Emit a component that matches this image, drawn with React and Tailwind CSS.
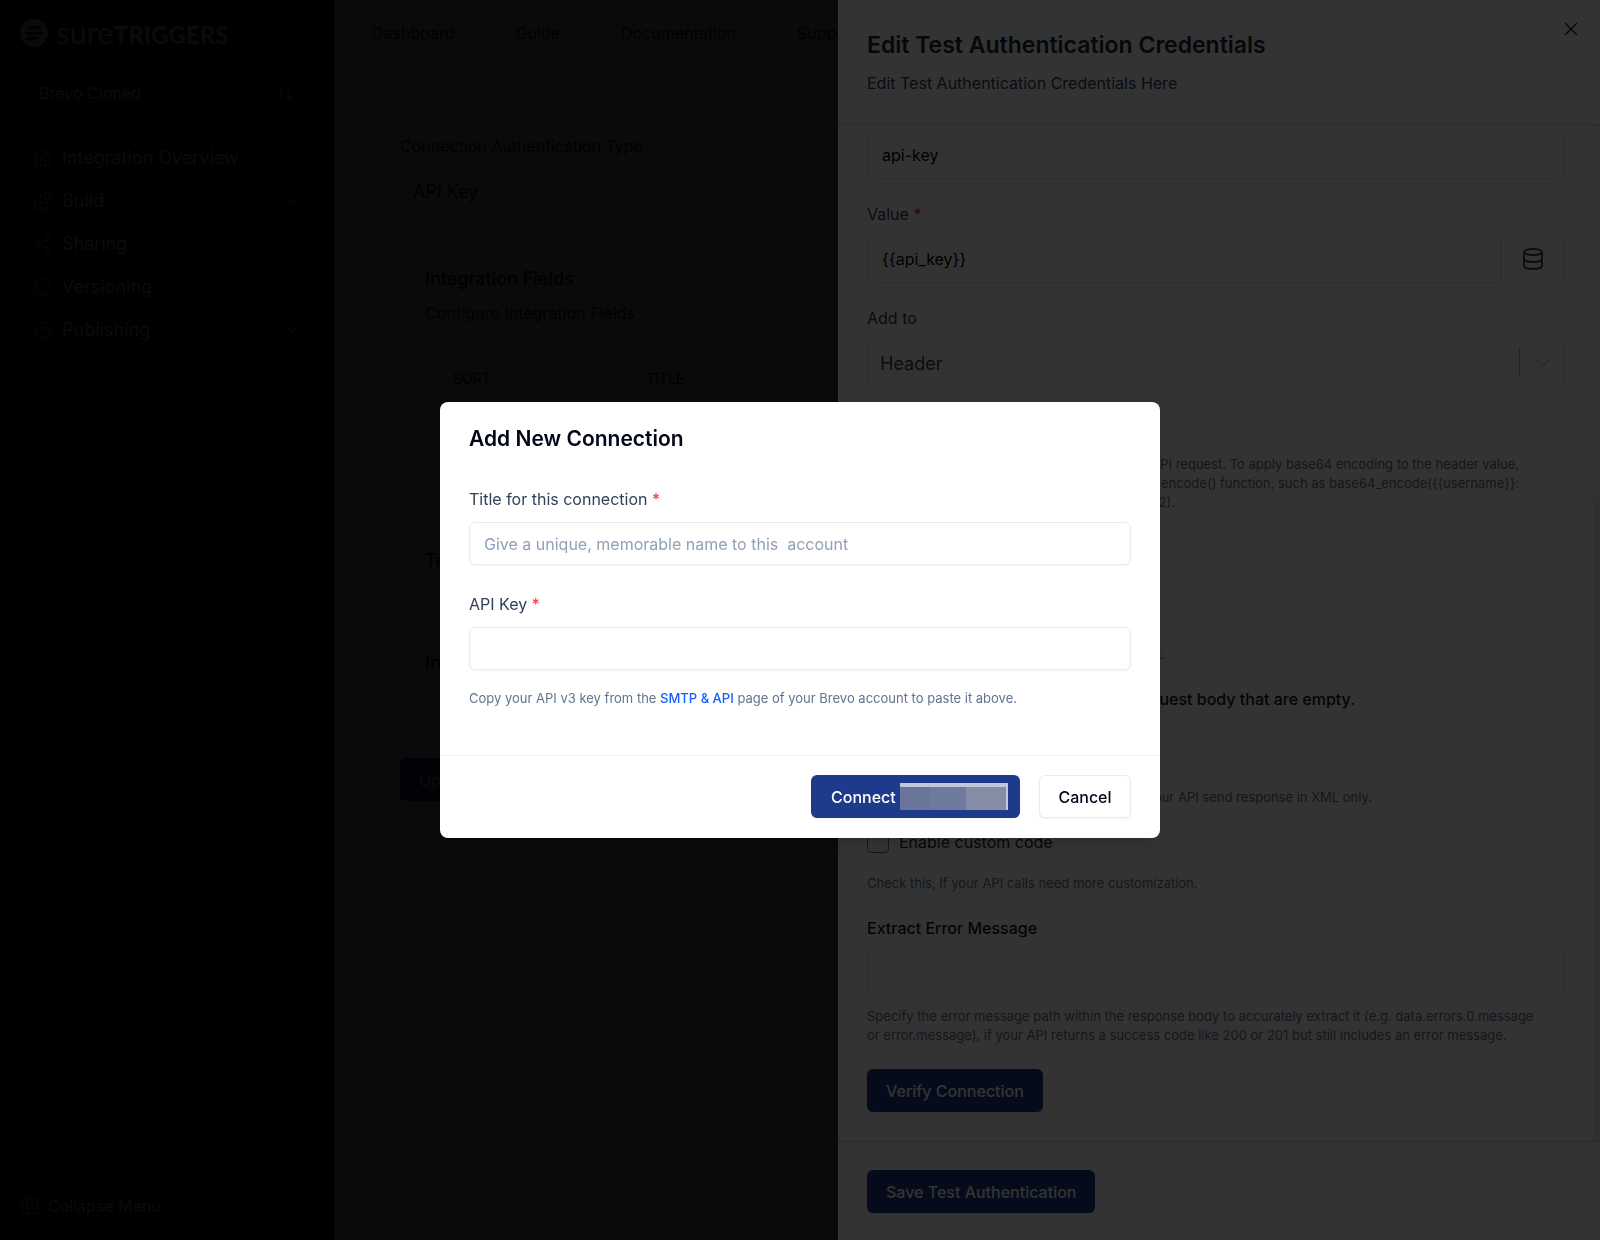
import { useState } from "react";
import {
  ArrowUpDown,
  Blocks,
  ChevronDown,
  CircleCheckBig,
  Clock8,
  Database,
  House,
  PanelLeftClose,
  Share2,
  X,
} from "lucide-react";

const navItems = [
  { label: "Integration Overview", icon: House },
  { label: "Build", icon: Blocks, expandable: true },
  { label: "Sharing", icon: Share2 },
  { label: "Versioning", icon: Clock8 },
  { label: "Publishing", icon: CircleCheckBig, expandable: true },
];

const topLinks = ["Dashboard", "Guide", "Documentation", "Support"];

const inputClass =
  "w-full rounded-md border border-[#e7ecf2] bg-white px-3.5 text-base shadow-xs placeholder:text-slate-400";

const primaryButton =
  "flex h-[43px] items-center rounded-md bg-[#1e3a8a] px-[19px] text-base font-medium text-white shadow-xs";

function Logo() {
  return (
    <div className="flex h-7 items-center gap-2 text-white">
      <svg viewBox="0 0 28 28" className="size-7" aria-hidden="true">
        <circle cx="14" cy="14" r="14" fill="currentColor" />
        <g fill="#020617">
          <path d="M8 10.5c1.5-2.4 3.3-3.7 5.8-3.7h9c-1.3 2.3-3.1 3.7-5.6 3.7H8Z" />
          <rect x="5" y="12.7" width="18" height="2.8" rx="1.4" />
          <path d="M20 17.6c-1.5 2.4-3.3 3.7-5.8 3.7h-9c1.3-2.3 3.1-3.7 5.6-3.7H20Z" />
        </g>
      </svg>
      <span className="font-['Lato',sans-serif] text-[31px] leading-7">
        sure<span className="text-2xl leading-7 font-black">TRIGGERS</span>
      </span>
    </div>
  );
}

function Sidebar() {
  return (
    <aside className="flex w-[334px] shrink-0 flex-col bg-slate-950 px-5 text-white">
      <div className="pt-[19px]">
        <Logo />
      </div>

      <button
        type="button"
        className="mt-6 flex h-[43px] items-center justify-between rounded-md border border-slate-800 px-[18px] text-base"
      >
        Brevo Cloned
        <ArrowUpDown className="size-5 text-slate-400" strokeWidth={1.5} />
      </button>

      <nav className="mt-[22px] flex flex-col">
        {navItems.map(({ label, icon: Icon, expandable }) => (
          <a
            key={label}
            href="#"
            className="flex h-[43px] items-center gap-[9px] px-[13px] text-lg"
          >
            <Icon className="size-5 text-slate-400" strokeWidth={1.5} />
            <span className="flex-1">{label}</span>
            {expandable && (
              <ChevronDown className="size-[18px] text-slate-400" />
            )}
          </a>
        ))}
      </nav>

      <button
        type="button"
        className="mt-auto mb-[22px] flex items-center gap-2 text-base"
      >
        <PanelLeftClose className="size-5 text-slate-400" />
        Collapse Menu
      </button>
    </aside>
  );
}

function IntegrationPage() {
  return (
    <main className="min-w-0 flex-1 bg-white text-slate-900">
      <nav className="flex h-[66px] items-center gap-[61px] pl-[38px] text-base">
        {topLinks.map((link) => (
          <a key={link} href="#">
            {link}
          </a>
        ))}
      </nav>

      <div className="pt-[68px] pr-16 pl-[66px]">
        <label htmlFor="authType" className="block text-base leading-6">
          Connection Authentication Type
        </label>
        <select
          id="authType"
          className="mt-2.5 h-12 w-full appearance-none rounded-md border border-slate-200 px-3 text-lg"
        >
          <option>API Key</option>
        </select>

        <section className="mt-6 rounded-md border border-slate-200 px-6 py-6">
          <h2 className="text-lg font-medium text-black">Integration Fields</h2>
          <p className="mt-2 text-base">Configure Integration Fields</p>
          <table className="mt-8 w-full text-left text-sm">
            <thead>
              <tr>
                <th className="w-[193px] px-7 py-3 font-medium">SORT</th>
                <th className="px-7 py-3 font-medium">TITLE</th>
              </tr>
            </thead>
            <tbody>
              <tr className="h-[88px]">
                <td />
                <td />
              </tr>
            </tbody>
          </table>
          <h2 className="mt-[58px] text-lg font-medium text-black">
            Test Authentication
          </h2>
          <h2 className="mt-[49px] border-t border-slate-200 pt-6 text-lg font-medium text-black">
            Integration Connection
          </h2>
        </section>

        <button type="button" className={`${primaryButton} mt-14`}>
          Update
        </button>
      </div>
    </main>
  );
}

function Drawer() {
  const [header, setHeader] = useState("api-key");
  const [value, setValue] = useState("{{api_key}}");

  return (
    <aside className="fixed inset-y-0 right-0 flex w-[762px] max-w-full flex-col bg-white text-slate-900">
      <header className="relative h-[125px] shrink-0 border-b border-slate-300 pt-[29px] pl-[29px]">
        <h2 className="text-[23px] leading-8 font-semibold text-slate-800">
          Edit Test Authentication Credentials
        </h2>
        <p className="mt-2.5 text-base leading-6 text-slate-700">
          Edit Test Authentication Credentials Here
        </p>
        <button
          type="button"
          aria-label="Close panel"
          className="absolute top-[18px] right-[18px]"
        >
          <X className="size-[22px]" strokeWidth={1.3} />
        </button>
      </header>

      <div className="flex min-h-0 flex-1">
        <div className="min-w-0 flex-1 overflow-hidden pt-1.5 pr-7 pl-[29px]">
          <input
            aria-label="Header key"
            value={header}
            onChange={(e) => setHeader(e.target.value)}
            className={`${inputClass} h-12 text-black`}
          />

          <label
            htmlFor="headerValue"
            className="mt-[23px] block text-base leading-6 text-slate-700"
          >
            Value <span className="text-red-500">*</span>
          </label>
          <div className="mt-[9px] flex">
            <input
              id="headerValue"
              value={value}
              onChange={(e) => setValue(e.target.value)}
              className={`${inputClass} h-12 rounded-r-none text-black`}
            />
            <button
              type="button"
              aria-label="Insert field"
              className="flex h-12 w-16 shrink-0 items-center justify-center rounded-r-md border border-slate-200 text-slate-700"
            >
              <Database className="size-6" strokeWidth={1.8} />
            </button>
          </div>

          <label
            htmlFor="addTo"
            className="mt-[23px] block text-base leading-6 text-slate-700"
          >
            Add to
          </label>
          <div className="relative mt-[9px]">
            <select
              id="addTo"
              className="h-12 w-full appearance-none rounded-md border border-[#e7ecf2] px-3 pt-0.5 text-lg text-slate-700"
            >
              <option>Header</option>
            </select>
            <div className="pointer-events-none absolute inset-y-2.5 right-0 flex w-[46px] items-center justify-center border-l border-slate-400">
              <ChevronDown className="size-6 text-slate-300" />
            </div>
          </div>

          <div className="mt-[68px] mr-[46px] text-right text-[13px] leading-[19px] text-slate-500">
            <p>API request. To apply base64 encoding to the header value,</p>
            <p>encode() function, such as base64_encode({"{{username}}"}:</p>
            <p className="mr-[344px]">2).</p>
          </div>

          <p className="mt-[133px] mr-[400px] text-right text-[13px] leading-[19px] text-slate-500">
            request.
          </p>
          <p className="mt-[23px] mr-[210px] text-right text-base leading-6 font-medium">
            request body that are empty.
          </p>
          <p className="mt-[77px] mr-[193px] text-right text-[13px] leading-[19px] text-slate-500">
            your API send response in XML only.
          </p>

          <label className="mt-[23px] flex items-center gap-2.5 text-base leading-6 text-slate-800">
            <input
              type="checkbox"
              className="size-[22px] appearance-none rounded border border-slate-500"
            />
            Enable custom code
          </label>
          <p className="mt-5 text-[13px] leading-[19px] text-slate-500">
            Check this, If your API calls need more customization.
          </p>

          <label
            htmlFor="errorPath"
            className="mt-[23px] block text-base leading-6 font-medium"
          >
            Extract Error Message
          </label>
          <input id="errorPath" className={`${inputClass} mt-[9px] h-12`} />
          <p className="mt-2.5 text-[13px] leading-[19px] text-slate-500">
            Specify the error message path within the response body to accurately
            extract it (e.g. data.errors.0.message
            <br />
            or error.message), if your API returns a success code like 200 or 201
            but still includes an error message.
          </p>

          <button type="button" className={`${primaryButton} mt-6`}>
            Verify Connection
          </button>
        </div>
        <div className="w-[7px] bg-slate-200">
          <div className="h-[374px] bg-neutral-100" />
        </div>
      </div>

      <footer className="h-[99px] shrink-0 border-t border-slate-300 pt-7 pl-[29px]">
        <button type="button" className={primaryButton}>
          Save Test Authentication
        </button>
      </footer>
    </aside>
  );
}

function ConnectionModal() {
  const [title, setTitle] = useState("");
  const [apiKey, setApiKey] = useState("");

  return (
    <div
      role="dialog"
      aria-labelledby="modalTitle"
      className="w-full max-w-[720px] rounded-lg bg-white shadow-lg"
    >
      <div className="px-[29px] pt-[21px] pb-[47px]">
        <h2
          id="modalTitle"
          className="text-[21px] leading-8 font-semibold text-slate-950"
        >
          Add New Connection
        </h2>

        <label
          htmlFor="title"
          className="mt-8 block text-base leading-6 text-slate-700"
        >
          Title for this connection <span className="text-red-500">*</span>
        </label>
        <input
          id="title"
          value={title}
          onChange={(e) => setTitle(e.target.value)}
          placeholder="Give a unique, memorable name to this  account"
          className={`${inputClass} mt-[11px] h-[43px]`}
        />

        <label
          htmlFor="apiKey"
          className="mt-[27px] block text-base leading-6 text-slate-700"
        >
          API Key <span className="text-red-500">*</span>
        </label>
        <input
          id="apiKey"
          value={apiKey}
          onChange={(e) => setApiKey(e.target.value)}
          className={`${inputClass} mt-[11px] h-[43px]`}
        />

        <p className="mt-[18px] text-[13px] leading-5 text-slate-500">
          Copy your API v3 key from the{" "}
          <a href="#" className="font-medium text-blue-600">
            SMTP &amp; API
          </a>{" "}
          page of your Brevo account to paste it above.
        </p>
      </div>

      <div className="flex justify-end gap-[19px] border-t border-[#edf1f6] px-[29px] pt-[19px] pb-5">
        <button
          type="button"
          className="flex h-[43px] w-[209px] items-center gap-1 rounded-md bg-[#1e3a8a] pl-5 text-base font-medium text-white shadow-xs"
        >
          Connect
          {/* masked account name */}
          <span className="flex h-[27px] w-[108px] border-t-4 border-r-2 border-[#c0c7db]">
            <span className="w-[30px] bg-[#69769a]" />
            <span className="flex-1 bg-[#6f7b9c]" />
            <span className="w-10 bg-[#858ca6]" />
          </span>
        </button>
        <button
          type="button"
          className="h-[43px] w-[92px] rounded-md border border-[#e7ecf2] bg-white text-base font-medium text-slate-950 shadow-xs"
        >
          Cancel
        </button>
      </div>
    </div>
  );
}

export default function App() {
  return (
    <div className="flex min-h-screen font-['Inter','Liberation_Sans',sans-serif]">
      <Sidebar />
      <IntegrationPage />
      <div className="fixed inset-0 bg-black/80" />
      <Drawer />
      <div className="fixed inset-0 flex items-center justify-center bg-black/80">
        <ConnectionModal />
      </div>
    </div>
  );
}
